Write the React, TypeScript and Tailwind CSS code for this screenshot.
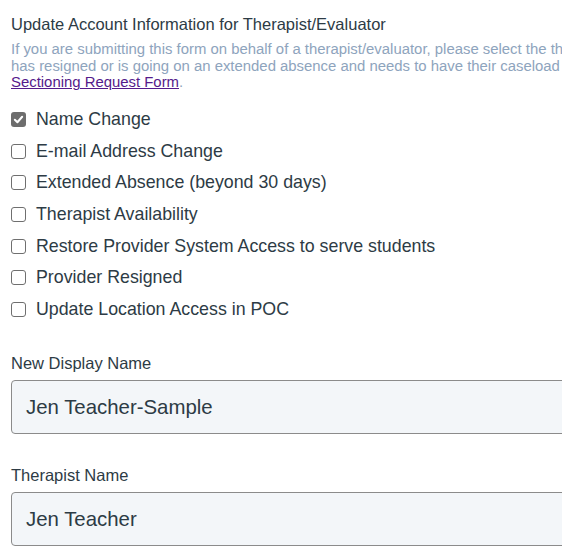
import React from "react";

const items = [
  { label: "Name Change", checked: true },
  { label: "E-mail Address Change", checked: false },
  { label: "Extended Absence (beyond 30 days)", checked: false },
  { label: "Therapist Availability", checked: false },
  { label: "Restore Provider System Access to serve students", checked: false },
  { label: "Provider Resigned", checked: false },
  { label: "Update Location Access in POC", checked: false },
];

function Box({ checked }: { checked: boolean }) {
  if (checked) {
    return (
      <span className="flex h-[15px] w-[15px] shrink-0 items-center justify-center rounded-[3px] bg-[#6d6d6d]">
        <svg width="11" height="11" viewBox="0 0 12 12">
          <path d="M2 6.3 L4.8 9 L10 3" fill="none" stroke="#fff" strokeWidth="2.2" strokeLinecap="round" strokeLinejoin="round" />
        </svg>
      </span>
    );
  }
  return <span className="h-[15px] w-[15px] shrink-0 rounded-[3px] border border-[#6f6f6f] bg-white" />;
}

export default function App() {
  return (
    <div className="h-[555px] w-[562px] overflow-hidden bg-white font-['Liberation_Sans',Arial,sans-serif] text-[#2d3b45]">
      <div className="w-[680px] pl-[11px] pt-[13px]">
        <h2 className="text-[16.5px] leading-[22px] text-[#2d3b45]">Update Account Information for Therapist/Evaluator</h2>
        <p className="mt-[6px] whitespace-nowrap text-[14.9px] leading-[16.7px] text-[#8ea4bd]">
          If you are submitting this form on behalf of a therapist/evaluator, please select the therapist&apos;s name below. If the therapist
          <br />
          has resigned or is going on an extended absence and needs to have their caseload reassigned, please complete the
          <br />
          <a href="#" className="text-[#551a8b] underline">Sectioning Request Form</a>.
        </p>
        <div className="mt-[18px] flex flex-col gap-[10.67px]">
          {items.map((it) => (
            <label key={it.label} className="flex h-[21px] items-center gap-[10px]">
              <Box checked={it.checked} />
              <span className="text-[17.8px] leading-[21px] text-[#2d3b45]">{it.label}</span>
            </label>
          ))}
        </div>
        <div className="mt-[33px]">
          <div className="text-[16.5px] leading-[20px] text-[#2d3b45]">New Display Name</div>
          <div className="mt-[7px] flex h-[54px] items-center rounded-[4px] border border-[#8b8b8b] bg-[#f3f6f9] pl-[14px] text-[20.4px] text-[#2d3b45]">
            Jen Teacher-Sample
          </div>
        </div>
        <div className="mt-[31px]">
          <div className="text-[16.5px] leading-[20px] text-[#2d3b45]">Therapist Name</div>
          <div className="mt-[7px] flex h-[54px] items-center rounded-[4px] border border-[#8b8b8b] bg-[#f3f6f9] pl-[14px] text-[20.4px] text-[#2d3b45]">
            Jen Teacher
          </div>
        </div>
      </div>
    </div>
  );
}
